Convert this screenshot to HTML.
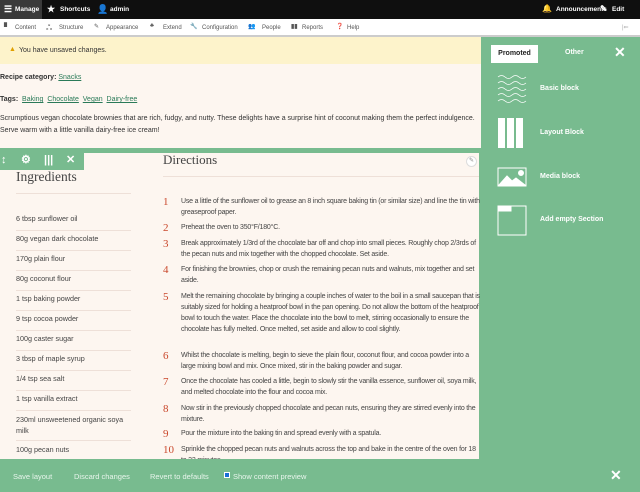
<!DOCTYPE html>
<html><head><meta charset="utf-8"><style>
*{box-sizing:border-box;margin:0;padding:0}
body{width:640px;height:492px;overflow:hidden;position:relative;background:#fdf6f0;font-family:"Liberation Sans",sans-serif;font-size:7px;color:#333}
.abs{position:absolute}
#tb{left:0;top:0;width:640px;height:19px;background:#0f0f0f;color:#fff;font-weight:bold;font-size:6.5px}
#tb span{position:absolute;top:6px}
#mn{left:0;top:19px;width:640px;height:18px;background:#fff;border-bottom:2px solid #ccc;font-size:6px;color:#555}
#mn span{position:absolute;top:6px}
#warn{left:0;top:37px;width:481px;height:27px;background:#fdf3cb;font-size:7px}
.lnk{color:#2a7a58;text-decoration:underline}
#panel{left:481px;top:37px;width:159px;height:455px;background:#78bb8f;color:#fff;font-weight:bold;font-size:7px}
#foot{left:0;top:459px;width:640px;height:33px;background:#78bb8f;color:#e8f5ec;font-size:7.5px}
.ing{position:absolute;left:16px;width:115px;border-bottom:1px solid #eee0d8;font-size:7.2px;color:#444}
.num{position:absolute;left:163px;color:#c9472b;font-size:11px;font-family:"Liberation Serif",serif}
.dt{position:absolute;left:181px;width:300px;font-size:7px;line-height:11px;color:#444;letter-spacing:-0.2px}
</style></head><body>
<div id="tb" class="abs">
<div class="abs" style="left:0;top:0;width:42px;height:19px;background:#3a3a3a"></div>
<span style="left:4px;top:5px;font-size:9px;line-height:8px">☰</span><span style="left:15px">Manage</span>
<span style="left:47px;top:4px;font-size:9px">★</span><span style="left:60px">Shortcuts</span>
<span style="left:97px;top:4px;font-size:9px">👤</span><span style="left:110px">admin</span>
<span style="left:542px;top:4px;font-size:8px">🔔</span><span style="left:556px">Announcements</span>
<span style="left:600px;top:4px;font-size:8px">✎</span><span style="left:612px">Edit</span>
</div>
<div id="mn" class="abs">
<span style="left:15px">Content</span><span style="left:59px">Structure</span><span style="left:106px">Appearance</span><span style="left:163px">Extend</span><span style="left:202px">Configuration</span><span style="left:262px">People</span><span style="left:302px">Reports</span><span style="left:347px">Help</span>
<span style="left:4px;top:4px;font-size:8px">▘</span><span style="left:46px;top:4px;font-size:8px">ஃ</span><span style="left:94px;top:4px">✎</span><span style="left:150px;top:4px">♣</span><span style="left:190px;top:4px">🔧</span><span style="left:248px;top:4px">👥</span><span style="left:291px;top:4px;font-weight:bold">▮▮</span><span style="left:336px;top:4px">❓</span>
<span style="left:622px;top:5px;color:#aaa">|⇐</span>
</div>
<div id="warn" class="abs"><span class="abs" style="left:9px;top:9px;color:#e0a000">▲</span><span class="abs" style="left:19px;top:10px">You have unsaved changes.</span></div>
<div class="abs" style="left:0;top:74px;font-weight:bold">Recipe category: <span class="lnk" style="font-weight:normal">Snacks</span></div>
<div class="abs" style="left:0;top:96px"><b>Tags:</b> &nbsp;<span class="lnk">Baking</span> &nbsp;<span class="lnk">Chocolate</span> &nbsp;<span class="lnk">Vegan</span> &nbsp;<span class="lnk">Dairy-free</span></div>
<div class="abs" style="left:0;top:113px;width:475px;line-height:12px;font-size:7px">Scrumptious vegan chocolate brownies that are rich, fudgy, and nutty. These delights have a surprise hint of coconut making them the perfect indulgence. Serve warm with a little vanilla dairy-free ice cream!</div>
<div class="abs" style="left:0;top:148px;width:481px;height:5px;background:#78bb8f"></div>
<div class="abs" style="left:479px;top:148px;width:3px;height:311px;background:#78bb8f"></div>
<div class="abs" style="left:0;top:153px;width:84px;height:17px;background:#78bb8f;color:#fff;font-weight:bold;font-size:11px">
<span class="abs" style="left:1px;top:1px">↕</span><span class="abs" style="left:21px;top:0">⚙</span><span class="abs" style="left:44px;top:1px">|||</span><span class="abs" style="left:66px;top:0">✕</span></div>
<div class="abs" style="left:16px;top:169px;font-family:'Liberation Serif',serif;font-size:13.5px;color:#444">Ingredients</div>
<div class="abs" style="left:16px;top:193px;width:115px;border-top:1px solid #eee0d8"></div>
<div class="abs" style="left:163px;top:152px;font-family:'Liberation Serif',serif;font-size:13px;color:#444">Directions</div>
<div class="abs" style="left:163px;top:176px;width:316px;border-top:1px solid #eee0d8"></div>
<div class="abs" style="left:466px;top:156px;width:11px;height:11px;border-radius:50%;background:#fff;border:1px solid #ddd;font-size:6px;color:#888;text-align:center;line-height:9px">✎</div>
<div class="ing" style="top:214px;height:17px">6 tbsp sunflower oil</div>
<div class="ing" style="top:234px;height:17px">80g vegan dark chocolate</div>
<div class="ing" style="top:254px;height:17px">170g plain flour</div>
<div class="ing" style="top:274px;height:17px">80g coconut flour</div>
<div class="ing" style="top:294px;height:17px">1 tsp baking powder</div>
<div class="ing" style="top:314px;height:17px">9 tsp cocoa powder</div>
<div class="ing" style="top:334px;height:17px">100g caster sugar</div>
<div class="ing" style="top:354px;height:17px">3 tbsp of maple syrup</div>
<div class="ing" style="top:374px;height:17px">1/4 tsp sea salt</div>
<div class="ing" style="top:394px;height:17px">1 tsp vanilla extract</div>
<div class="ing" style="top:414px;height:27px;line-height:11px">230ml unsweetened organic soya milk</div>
<div class="ing" style="top:445px;height:14px;border:none">100g pecan nuts</div>
<div class="num" style="top:196px">1</div><div class="dt" style="top:196px">Use a little of the sunflower oil to grease an 8 inch square baking tin (or similar size) and line the tin with greaseproof paper.</div>
<div class="num" style="top:222px">2</div><div class="dt" style="top:222px">Preheat the oven to 350°F/180°C.</div>
<div class="num" style="top:238px">3</div><div class="dt" style="top:238px">Break approximately 1/3rd of the chocolate bar off and chop into small pieces. Roughly chop 2/3rds of the pecan nuts and mix together with the chopped chocolate. Set aside.</div>
<div class="num" style="top:264px">4</div><div class="dt" style="top:264px">For finishing the brownies, chop or crush the remaining pecan nuts and walnuts, mix together and set aside.</div>
<div class="num" style="top:291px">5</div><div class="dt" style="top:291px">Melt the remaining chocolate by bringing a couple inches of water to the boil in a small saucepan that is suitably sized for holding a heatproof bowl in the pan opening. Do not allow the bottom of the heatproof bowl to touch the water. Place the chocolate into the bowl to melt, stirring occasionally to ensure the chocolate has fully melted. Once melted, set aside and allow to cool slightly.</div>
<div class="num" style="top:350px">6</div><div class="dt" style="top:350px">Whilst the chocolate is melting, begin to sieve the plain flour, coconut flour, and cocoa powder into a large mixing bowl and mix. Once mixed, stir in the baking powder and sugar.</div>
<div class="num" style="top:376px">7</div><div class="dt" style="top:376px">Once the chocolate has cooled a little, begin to slowly stir the vanilla essence, sunflower oil, soya milk, and melted chocolate into the flour and cocoa mix.</div>
<div class="num" style="top:403px">8</div><div class="dt" style="top:403px">Now stir in the previously chopped chocolate and pecan nuts, ensuring they are stirred evenly into the mixture.</div>
<div class="num" style="top:428px">9</div><div class="dt" style="top:428px">Pour the mixture into the baking tin and spread evenly with a spatula.</div>
<div class="num" style="top:444px">10</div><div class="dt" style="top:444px">Sprinkle the chopped pecan nuts and walnuts across the top and bake in the centre of the oven for 18 to 22 minutes.</div>
<div id="panel" class="abs">
<div class="abs" style="left:10px;top:8px;width:47px;height:18px;background:#fff;color:#222;text-align:center;line-height:18px">Promoted</div>
<div class="abs" style="left:84px;top:12px">Other</div>
<div class="abs" style="left:133px;top:7px;font-size:14px">✕</div>
<svg class="abs" style="left:16px;top:37px" width="30" height="30" viewBox="0 0 30 30" fill="none" stroke="#fff" stroke-width="0.8"><path d="M1 3q3.5-3 7 0t7 0t7 0t7 0M1 9q3.5-3 7 0t7 0t7 0t7 0M1 15q3.5-3 7 0t7 0t7 0t7 0M1 21q3.5-3 7 0t7 0t7 0t7 0M1 27q3.5-3 7 0t7 0t7 0t7 0"/></svg>
<div class="abs" style="left:59px;top:48px">Basic block</div>
<svg class="abs" style="left:16px;top:80px" width="28" height="32"><rect x="1" y="1" width="7" height="30" fill="#fff"/><rect x="10" y="1" width="7" height="30" fill="#fff"/><rect x="19" y="1" width="7" height="30" fill="#fff"/></svg>
<div class="abs" style="left:59px;top:92px">Layout Block</div>
<svg class="abs" style="left:16px;top:130px" width="30" height="20" fill="none" stroke="#fff"><rect x="1" y="1" width="28" height="18" stroke-width="1"/><path d="M2 18L10 9L15 14L19 11L28 18Z" fill="#fff"/><circle cx="24" cy="6" r="2.5" fill="#fff"/></svg>
<div class="abs" style="left:59px;top:136px">Media block</div>
<svg class="abs" style="left:16px;top:168px" width="30" height="31" fill="none" stroke="#fff"><rect x="1" y="1" width="28" height="29" stroke-width="1"/><rect x="1" y="1" width="13" height="5" fill="#fff"/></svg>
<div class="abs" style="left:59px;top:179px">Add empty Section</div>
</div>
<div id="foot" class="abs">
<span class="abs" style="left:13px;top:13px">Save layout</span>
<span class="abs" style="left:74px;top:13px">Discard changes</span>
<span class="abs" style="left:150px;top:13px">Revert to defaults</span>
<span class="abs" style="left:224px;top:13px;width:6px;height:6px;background:#1a6fd6;border:1px solid #fff"></span>
<span class="abs" style="left:233px;top:13px">Show content preview</span>
<span class="abs" style="left:610px;top:8px;font-size:14px;color:#fff;font-weight:bold">✕</span>
</div>
</body></html>
